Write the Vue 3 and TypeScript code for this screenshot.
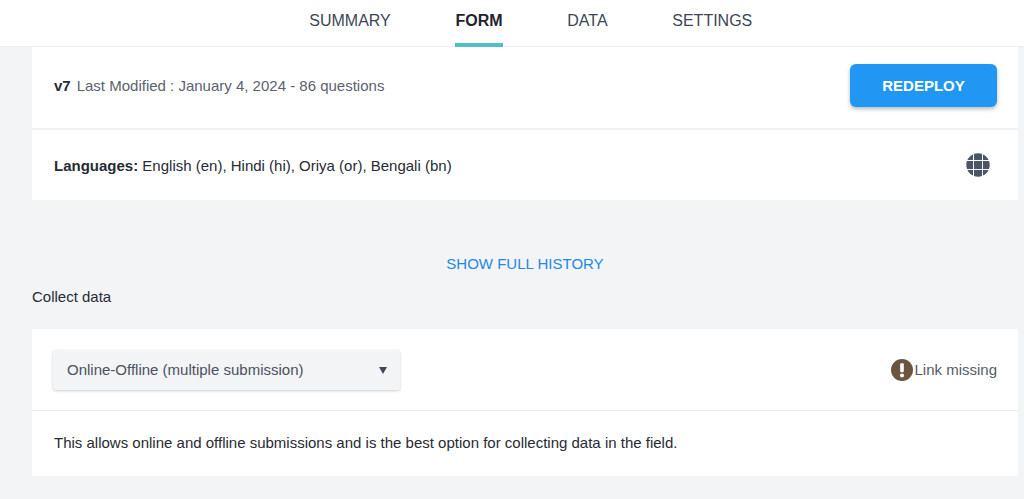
<script setup lang="ts">
const tabs: { label: string; active?: boolean }[] = [
  { label: 'SUMMARY' },
  { label: 'FORM', active: true },
  { label: 'DATA' },
  { label: 'SETTINGS' },
]
</script>

<template>
  <div class="page">
    <nav class="topbar">
      <a v-for="t in tabs" :key="t.label" class="tab" :class="{ active: t.active }">{{ t.label }}</a>
    </nav>
    <main class="content">
      <section class="card">
        <div class="row version-row">
          <div class="version-text">
            <strong class="ver">v7</strong>
            <span class="meta">Last Modified : January 4, 2024 - 86 questions</span>
          </div>
          <button class="redeploy">REDEPLOY</button>
        </div>
        <div class="row lang-row">
          <div><strong>Languages:</strong> English (en), Hindi (hi), Oriya (or), Bengali (bn)</div>
          <svg class="globe" viewBox="0 0 24 24" width="24" height="24" aria-hidden="true">
            <defs>
              <clipPath id="globe-clip"><circle cx="12" cy="12" r="11.7" /></clipPath>
            </defs>
            <g clip-path="url(#globe-clip)" fill="#4a5568">
              <rect x="0" y="0" width="7" height="7" />
              <rect x="8" y="0" width="8" height="7" />
              <rect x="17" y="0" width="7" height="7" />
              <rect x="0" y="8" width="7" height="8" />
              <rect x="8" y="8" width="8" height="8" />
              <rect x="17" y="8" width="7" height="8" />
              <rect x="0" y="17" width="7" height="7" />
              <rect x="8" y="17" width="8" height="7" />
              <rect x="17" y="17" width="7" height="7" />
            </g>
          </svg>
        </div>
      </section>

      <div class="history"><a class="history-link">SHOW FULL HISTORY</a></div>
      <div class="collect-title">Collect data</div>

      <section class="card collect">
        <div class="row select-row">
          <div class="select">
            <span>Online-Offline (multiple submission)</span>
            <span class="caret"></span>
          </div>
          <div class="missing">
            <svg viewBox="0 0 24 24" width="22" height="22" aria-hidden="true">
              <circle cx="12" cy="12" r="12" fill="#6b5540" />
              <rect x="10" y="4.5" width="4" height="10" rx="1.2" fill="#fff" />
              <circle cx="12" cy="18" r="2.2" fill="#fff" />
            </svg>
            <span>Link missing</span>
          </div>
        </div>
        <div class="row desc-row">This allows online and offline submissions and is the best option for collecting data in the field.</div>
      </section>
    </main>
  </div>
</template>

<style>
html, body { margin: 0; background: #f3f4f6; }
</style>

<style scoped>
.page {
  height: 499px;
  overflow: hidden;
  background: #f3f4f6;
  font-family: "Liberation Sans", Arial, sans-serif;
  font-size: 15px;
  color: #272b33;
}
.topbar {
  height: 46px;
  box-sizing: content-box;
  background: #fff;
  border-bottom: 1px solid #eceef3;
  display: flex;
  justify-content: center;
  gap: 64.7px;
  padding-left: 37.6px;
}
.tab {
  height: 46px;
  box-sizing: border-box;
  line-height: 42px;
  font-size: 16px;
  color: #3d4656;
  position: relative;
}
.tab.active {
  color: #1e2430;
  font-weight: 700;
}
.tab.active::after {
  content: "";
  position: absolute;
  left: 0;
  right: 0;
  bottom: -1px;
  height: 4px;
  background: #4fbfcb;
}
.content {
  margin: 0 6px 0 32px;
}
.card {
  background: #fff;
}
.row {
  display: flex;
  align-items: center;
  justify-content: space-between;
  box-sizing: border-box;
  padding: 0 22px;
}
.version-row {
  height: 83px;
  padding-right: 21px;
  border-bottom: 2px solid #f0f1f5;
  align-items: flex-start;
  padding-top: 17px;
}
.version-text {
  padding-top: 13px;
  line-height: 17px;
}
.ver {
  margin-right: 6px;
  color: #272b33;
}
.meta {
  color: #5b6270;
}
.redeploy {
  width: 147px;
  height: 43px;
  border: none;
  border-radius: 6px;
  background: #2196f3;
  color: #fff;
  font-family: inherit;
  font-size: 15px;
  font-weight: 700;
  box-shadow: 0 2px 4px rgba(0, 0, 0, 0.28);
  padding: 0;
}
.lang-row {
  height: 70px;
  padding-right: 28px;
}
.lang-row strong {
  color: #272b33;
}
.globe {
  display: block;
}
.history {
  text-align: center;
  margin-top: 55px;
  line-height: 17px;
}
.history-link {
  color: #2388e6;
  font-size: 15px;
}
.collect-title {
  margin-top: 16px;
  line-height: 17px;
  color: #272b33;
}
.collect {
  margin-top: 24px;
}
.select-row {
  height: 82px;
  border-bottom: 1px solid #e8eaf0;
  padding-right: 21px;
}
.select {
  width: 347px;
  height: 40px;
  box-sizing: border-box;
  padding: 0 13px 0 14px;
  margin-left: -1px;
  border-radius: 3px;
  background: #f3f4f6;
  box-shadow: 0 1px 3px rgba(0, 0, 0, 0.2);
  color: #4a5160;
  display: flex;
  align-items: center;
  justify-content: space-between;
}
.caret {
  width: 0;
  height: 0;
  border-left: 4px solid transparent;
  border-right: 4px solid transparent;
  border-top: 7px solid #3f4858;
  margin-top: 2px;
}
.missing {
  display: flex;
  align-items: center;
  gap: 1px;
  color: #555b66;
}
.missing svg {
  display: block;
}
.desc-row {
  height: 65px;
  padding-bottom: 2px;
  color: #272b33;
}
</style>
